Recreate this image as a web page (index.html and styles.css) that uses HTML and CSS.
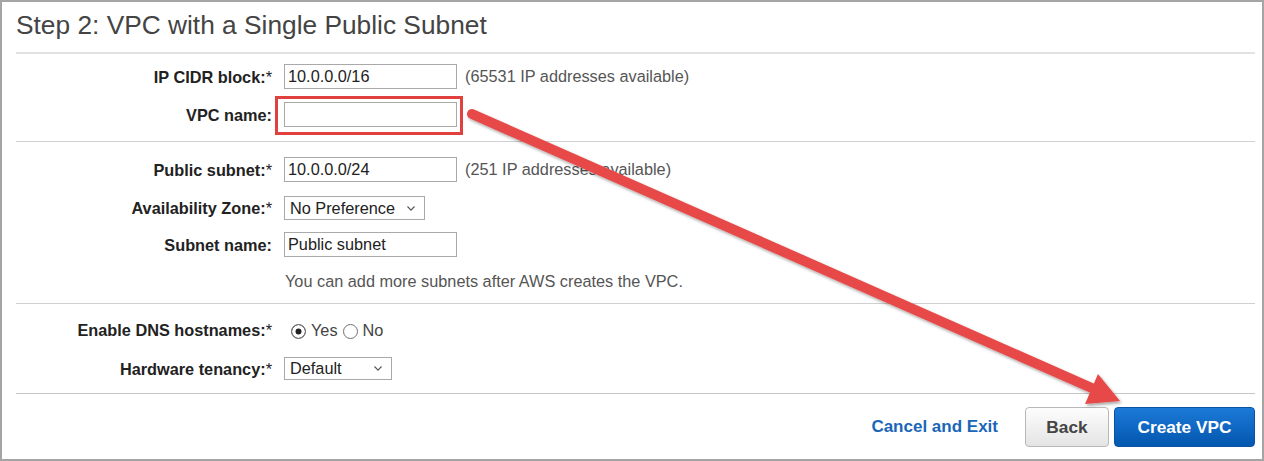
FILE: index.html
```html
<!DOCTYPE html>
<html lang="en">
<head>
<meta charset="utf-8">
<title>Step 2: VPC with a Single Public Subnet</title>
<link rel="stylesheet" href="styles.css">
</head>
<body>
<div class="frame">
  <h1 class="title">Step 2: VPC with a Single Public Subnet</h1>

  <section class="sec sec1">
    <div class="row">
      <label class="lbl">IP CIDR block:<span class="req">*</span></label>
      <div class="field"><input class="txt" type="text" value="10.0.0.0/16"><span class="hint">(65531 IP addresses available)</span></div>
    </div>
    <div class="row">
      <label class="lbl">VPC name:</label>
      <div class="field"><span class="hlwrap"><input class="txt" type="text" value=""><span class="hl"></span></span></div>
    </div>
  </section>

  <section class="sec sec2">
    <div class="row">
      <label class="lbl">Public subnet:<span class="req">*</span></label>
      <div class="field"><input class="txt" type="text" value="10.0.0.0/24"><span class="hint">(251 IP addresses available)</span></div>
    </div>
    <div class="row">
      <label class="lbl">Availability Zone:<span class="req">*</span></label>
      <div class="field"><div class="select sel-az"><span>No Preference</span><svg class="chev" width="8" height="5" viewBox="0 0 8 5"><path d="M0.5 0.5 L4 4.2 L7.5 0.5" fill="none" stroke="#555" stroke-width="1.1"/></svg></div></div>
    </div>
    <div class="row">
      <label class="lbl">Subnet name:</label>
      <div class="field"><input class="txt" type="text" value="Public subnet"></div>
    </div>
    <div class="row note-row">
      <span></span>
      <div class="note">You can add more subnets after AWS creates the VPC.</div>
    </div>
  </section>

  <section class="sec sec3">
    <div class="row radio-row">
      <label class="lbl">Enable DNS hostnames:<span class="req">*</span></label>
      <div class="field radios">
        <input class="rad" type="radio" name="dns" checked><span class="rtxt">Yes</span>
        <input class="rad" type="radio" name="dns"><span class="rtxt">No</span>
      </div>
    </div>
    <div class="row">
      <label class="lbl">Hardware tenancy:<span class="req">*</span></label>
      <div class="field"><div class="select sel-ten"><span>Default</span><svg class="chev" width="8" height="5" viewBox="0 0 8 5"><path d="M0.5 0.5 L4 4.2 L7.5 0.5" fill="none" stroke="#555" stroke-width="1.1"/></svg></div></div>
    </div>
  </section>

  <div class="footer">
    <a class="cancel" href="#">Cancel and Exit</a>
    <button class="btn btn-back" type="button">Back</button>
    <button class="btn btn-create" type="button">Create VPC</button>
  </div>

  <svg class="arrow" width="1264" height="461" viewBox="0 0 1264 461">
    <defs>
      <filter id="sh" x="-10%" y="-10%" width="120%" height="130%">
        <feDropShadow dx="1.5" dy="2" stdDeviation="1.5" flood-color="#000" flood-opacity="0.35"/>
      </filter>
    </defs>
    <g filter="url(#sh)">
      <line x1="472" y1="114" x2="1094" y2="389" stroke="#e64a47" stroke-width="10" stroke-linecap="round"/>
      <polygon points="1085,404 1098,374 1120,401" fill="#e64a47"/>
    </g>
  </svg>
</div>
</body>
</html>
```
FILE: styles.css
```css
html, body {
  margin: 0;
  padding: 0;
  background: #fff;
}

.frame {
  position: relative;
  width: 1264px;
  height: 461px;
  box-sizing: border-box;
  border: 2px solid #a5a5a5;
  padding: 0 7px 0 14px;
  font-family: "Liberation Sans", Arial, sans-serif;
  color: #222;
  overflow: hidden;
}

.title {
  margin: 0;
  padding: 8px 0 12px 0;
  font-size: 26.3px;
  line-height: 30px;
  font-weight: normal;
  color: #444;
  border-bottom: 2px solid #e2e2e2;
}

.sec {
  display: flex;
  flex-direction: column;
  border-bottom: 1px solid #d0d0d0;
}

.sec1 {
  padding: 10px 0 14px;
  gap: 13px;
}

.sec2 {
  padding: 15px 0 12px;
  gap: 14px;
}

.sec2 .row:nth-child(2) {
  margin-bottom: -2px;
}

.sec3 {
  padding: 14px 0 13px;
  gap: 15px;
  border-bottom-color: #c6c6c6;
}

.row {
  display: grid;
  grid-template-columns: 256px 1fr;
  column-gap: 12px;
  align-items: center;
}

.lbl {
  text-align: right;
  font-weight: bold;
  font-size: 16.3px;
  line-height: 20px;
  color: #222;
}

.req {
  font-weight: normal;
}

.field {
  display: flex;
  align-items: center;
  font-size: 16px;
}

.txt {
  width: 173px;
  height: 25px;
  box-sizing: border-box;
  border: 1px solid #a9a9a9;
  border-radius: 0;
  padding: 0 3px;
  margin: 0;
  font-family: "Liberation Sans", Arial, sans-serif;
  font-size: 16.3px;
  color: #222;
  background: #fff;
  outline: none;
}

.hint {
  margin-left: 8px;
  color: #555;
  font-size: 16.3px;
}

.hlwrap {
  position: relative;
  display: inline-block;
  height: 25px;
}

.hl {
  position: absolute;
  left: -9px;
  top: -6px;
  right: -6px;
  bottom: -8px;
  border: 3px solid #e0403e;
}

.select {
  display: flex;
  align-items: center;
  justify-content: space-between;
  box-sizing: border-box;
  height: 24px;
  border: 1px solid #a9a9a9;
  padding: 0 9px 0 5px;
  font-size: 16.3px;
  color: #222;
  background: #fff;
}

.sel-az {
  width: 141px;
}

.sel-ten {
  width: 108px;
  height: 23px;
}

.chev {
  display: block;
}

.note {
  font-size: 16.3px;
  line-height: 20px;
  color: #555;
  padding-left: 1px;
}

.radio-row {
  height: 24px;
}

.radios {
  padding-left: 7px;
}

.rad {
  appearance: none;
  -webkit-appearance: none;
  width: 15px;
  height: 15px;
  margin: 3px 0 0 0;
  border: 1px solid #707070;
  border-radius: 50%;
  background: #fff;
  box-sizing: border-box;
}

.rad:checked {
  background: #222;
  box-shadow: inset 0 0 0 3.5px #fff;
}

.rtxt {
  margin: 0 5px 0 5px;
  color: #444;
  font-size: 16.3px;
}

.footer {
  display: flex;
  justify-content: flex-end;
  align-items: center;
  padding-top: 13px;
}

.cancel {
  margin-right: 27px;
  color: #1a66b8;
  font-weight: bold;
  font-size: 17px;
  text-decoration: none;
}

.btn {
  height: 40px;
  box-sizing: border-box;
  border-radius: 4px;
  font-family: "Liberation Sans", Arial, sans-serif;
  font-weight: bold;
  font-size: 17.3px;
  padding: 0;
  margin: 0;
}

.btn-back {
  width: 84px;
  border: 1px solid #b8b8b8;
  background: linear-gradient(#fdfdfd, #e4e4e4);
  color: #444;
  margin-right: 5px;
}

.btn-create {
  width: 141px;
  border: 1px solid #0a52a3;
  background: linear-gradient(#1c7ad8, #0357ae);
  color: #fff;
}

.arrow {
  position: absolute;
  left: -2px;
  top: -2px;
  pointer-events: none;
}
```
